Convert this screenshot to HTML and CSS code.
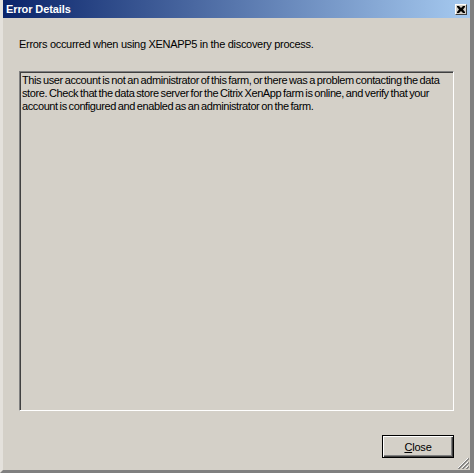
FILE: index.html
```html
<!DOCTYPE html>
<html>
<head>
<meta charset="utf-8">
<link rel="stylesheet" href="styles.css">
</head>
<body>
<div class="window">
  <div class="titlebar">
    <span class="title">Error Details</span>
    <span class="close-btn"><svg width="8" height="7" viewBox="0 0 8 7"><path d="M0 0h2l2 2 2-2h2v1L6 3.5 8 6v1H6L4 5 2 7H0V6l2-2.5L0 1z" fill="#000"/></svg></span>
  </div>
  <div class="client">
    <p class="message">Errors occurred when using XENAPP5 in the discovery process.</p>
    <div class="textbox">This user account is not an administrator of this farm, or there was a problem contacting the data store. Check that the data store server for the Citrix XenApp farm is online, and verify that your account is configured and enabled as an administrator on the farm.</div>
    <div class="footer">
      <button class="btn"><span class="ul">C</span>lose</button>
    </div>
    <svg class="grip" width="12" height="12" viewBox="0 0 12 12">
      <path d="M11 1L1 11M11 5L5 11M11 9L9 11" stroke="#fff" stroke-width="1"/>
      <path d="M12 1L1 12M12 5L5 12M12 9L9 12" stroke="#707070" stroke-width="1.2" transform="translate(0.5 0)"/>
    </svg>
  </div>
</div>
</body>
</html>
```
FILE: styles.css
```css
html, body {
  margin: 0;
  padding: 0;
  background: #d4d0c8;
}
.window {
  width: 474px;
  height: 473px;
  box-sizing: border-box;
  background: #d4d0c8;
  border-left: 3px solid #e4e1dc;
  border-right: 4px solid #808080;
  border-bottom: 3px solid #808080;
  display: flex;
  flex-direction: column;
  font-family: "Liberation Sans", Arial, sans-serif;
  font-size: 11px;
  letter-spacing: -0.3px;
  color: #000;
}
.titlebar {
  height: 18px;
  flex: none;
  background: linear-gradient(to right, #0a246a, #a6caf0);
  display: flex;
  align-items: center;
  justify-content: space-between;
  padding: 0 3px 0 3px;
}
.title {
  color: #fff;
  font-weight: bold;
  font-family: "Liberation Sans", Arial, sans-serif;
  font-size: 11px;
  letter-spacing: -0.1px;
}
.close-btn {
  width: 12px;
  height: 11px;
  box-sizing: border-box;
  background: #d4d0c8;
  border-top: 1px solid #fff;
  border-left: 1px solid #fff;
  border-right: 1px solid #404040;
  border-bottom: 1px solid #404040;
  display: flex;
  align-items: center;
  justify-content: center;
}
.client {
  flex: 1;
  position: relative;
  display: flex;
  flex-direction: column;
  padding: 0 16px 0 16px;
}
.message {
  margin: 20px 0 0 0;
  line-height: 13px;
}
.textbox {
  margin-top: 20px;
  height: 340px;
  box-sizing: border-box;
  border-top: 1px solid #808080;
  border-left: 1px solid #808080;
  border-right: 1px solid #fff;
  border-bottom: 1px solid #fff;
  box-shadow: inset 1px 1px 0 #404040, inset -1px -1px 0 #d4d0c8;
  padding: 2px 1px 2px 2px;
  line-height: 13px;
  letter-spacing: -0.4px;
  word-spacing: -0.8px;
}
.footer {
  display: flex;
  justify-content: flex-end;
  margin-top: 24px;
}
.btn {
  width: 72px;
  height: 23px;
  box-sizing: border-box;
  background: #d4d0c8;
  border: 1px solid #000;
  box-shadow: inset 1px 1px 0 #fff, inset -1px -1px 0 #404040, inset -2px -2px 0 #808080;
  font-family: "Liberation Sans", Arial, sans-serif;
  font-size: 11px;
  letter-spacing: -0.2px;
  color: #000;
  padding: 0;
}
.ul {
  text-decoration: underline;
}
.grip {
  position: absolute;
  right: 1px;
  bottom: 1px;
}
```
